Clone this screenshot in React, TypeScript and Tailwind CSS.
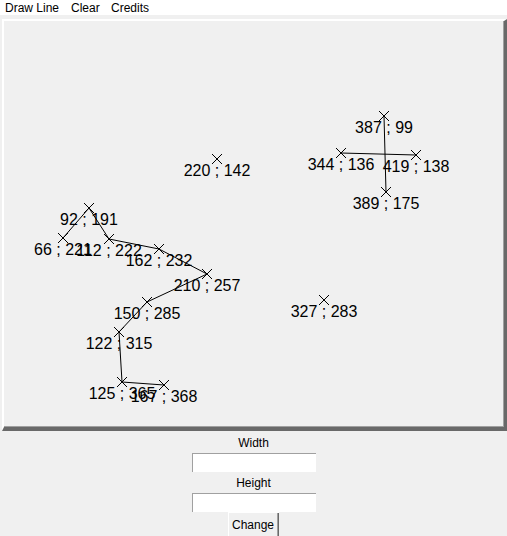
const points: [number, number][] = [
  [387, 99],
  [344, 136],
  [419, 138],
  [389, 175],
  [220, 142],
  [92, 191],
  [66, 221],
  [112, 222],
  [162, 232],
  [210, 257],
  [327, 283],
  [150, 285],
  [122, 315],
  [125, 365],
  [167, 368],
];

const lines: [number, number, number, number][] = [
  [387, 99, 389, 175],
  [344, 136, 419, 138],
  [92, 191, 66, 221],
  [92, 191, 112, 222],
  [112, 222, 162, 232],
  [162, 232, 210, 257],
  [210, 257, 150, 285],
  [150, 285, 122, 315],
  [122, 315, 125, 365],
  [125, 365, 167, 368],
];

// canvas coords -> svg coords inside the canvas area
const sx = (x: number) => x - 7;
const sy = (y: number) => y - 4;

function Canvas() {
  return (
    <svg width="499" height="405" className="block">
      {lines.map(([x1, y1, x2, y2], i) => (
        <line key={i} x1={sx(x1)} y1={sy(y1)} x2={sx(x2)} y2={sy(y2)} stroke="#000" strokeWidth="1" />
      ))}
      {points.map(([x, y], i) => (
        <g key={i}>
          <line x1={sx(x) - 5} y1={sy(y) - 5} x2={sx(x) + 5} y2={sy(y) + 5} stroke="#000" strokeWidth="1" />
          <line x1={sx(x) + 5} y1={sy(y) - 5} x2={sx(x) - 5} y2={sy(y) + 5} stroke="#000" strokeWidth="1" />
          <text
            x={sx(x)}
            y={sy(y) + 16.5}
            textAnchor="middle"
            fontSize="16"
            fontFamily="'Liberation Sans', Arial, sans-serif"
            fill="#000"
          >
            {x} ; {y}
          </text>
        </g>
      ))}
    </svg>
  );
}

export default function App() {
  return (
    <div className="w-[507px] h-[536px] overflow-hidden bg-[#f0f0f0] text-black font-['Liberation_Sans',Arial,sans-serif] text-[12px]">
      <div className="h-[15px] bg-white flex items-start leading-[15px] pt-[1px]">
        <span className="ml-[5px] w-[66px]">Draw Line</span>
        <span className="w-[40px]">Clear</span>
        <span>Credits</span>
      </div>

      <div className="mt-[4px] ml-[2px] w-[505px] border-t-2 border-l-2 border-t-white border-l-white border-r-[3px] border-b-[4px] border-r-[#696969] border-b-[#696969]">
        <div className="border-r border-b border-r-[#a0a0a0] border-b-[#a0a0a0] bg-[#f0f0f0]">
          <Canvas />
        </div>
      </div>

      <div className="flex flex-col items-center pt-[5px]">
        <div className="leading-[15px]">Width</div>
        <div className="mt-[2px] w-[124px] h-[19px] bg-white border-t border-l border-t-[#a0a0a0] border-l-[#a0a0a0]" />
        <div className="mt-[4px] leading-[15px]">Height</div>
        <div className="mt-[2px] w-[124px] h-[19px] bg-white border-t border-l border-t-[#a0a0a0] border-l-[#a0a0a0]" />
        <div className="w-[51px] h-[30px] bg-[#f0f0f0] border-t border-l border-t-white border-l-white flex">
          <div className="flex-1 border-r border-r-[#a0a0a0] pt-[5px] text-center leading-[15px]">Change</div>
          <div className="w-px bg-[#696969]" />
        </div>
      </div>
    </div>
  );
}
